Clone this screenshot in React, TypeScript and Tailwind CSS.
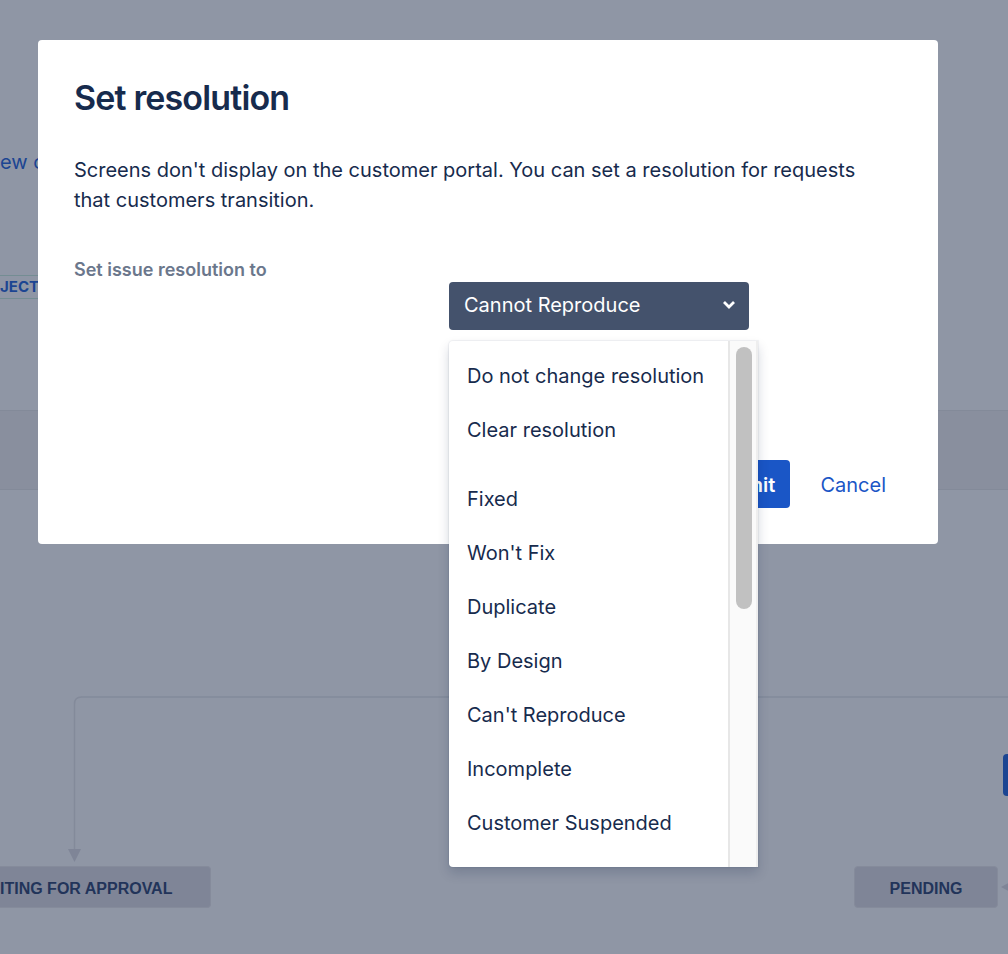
import React, { useState } from "react";

type Group = string[];

const groups: Group[] = [
  ["Do not change resolution", "Clear resolution"],
  ["Fixed", "Won't Fix", "Duplicate", "By Design", "Can't Reproduce", "Incomplete", "Customer Suspended"],
];

const Workflow: React.FC = () => (
  <div className="flex min-h-screen flex-col overflow-hidden bg-[#8f96a5]">
    <div className="h-[410px] pt-[147px]">
      <a href="#view" className="block text-xl leading-[30px] text-[#1c4592]">
        ew c
      </a>
      <div className="mt-[98px] flex">
        <span className="w-12 border-y border-[#748d93] text-[15px] leading-[22px] font-bold text-[#1c4592]">JECT</span>
      </div>
    </div>
    <div className="h-20 border-y border-[#838a99] bg-[#898f9e]" />

    {/* workflow canvas */}
    <div className="relative min-h-[464px] flex-1 font-['Liberation_Sans',sans-serif] text-base font-bold text-[#22345a]">
      <svg className="absolute inset-0 h-full w-full" fill="none">
        <path d="M74.5 360V214q0-7 7-7H4000" stroke="#838a9a" strokeWidth="1.5" />
        <path d="M68 359h13l-6.5 13z" fill="#7f8597" />
      </svg>
      <div className="absolute top-[376px] left-0 flex h-[42px] w-[211px] items-center rounded-r border border-l-0 border-[#858b9b] bg-[#7f8597] pt-[3px]">
        ITING FOR APPROVAL
      </div>
      <div className="absolute top-[376px] left-[854px] flex h-[42px] w-36 items-center justify-center rounded border border-[#858b9b] bg-[#7f8597] pt-[3px]">
        PENDING
      </div>
      <div className="absolute top-[264px] left-[1003px] h-[42px] w-36 rounded bg-[#1c4592]" />
      <svg className="absolute top-[390px] left-[1001px] h-3.5 w-3.5" viewBox="0 0 14 14">
        <path d="M0 7L13 0v14z" fill="#7f8597" />
      </svg>
    </div>
  </div>
);

const App: React.FC = () => {
  const [resolution, setResolution] = useState("Cannot Reproduce");

  return (
    <div className="relative overflow-hidden font-['Inter',sans-serif] text-[#172b4d]">
      <Workflow />

      <div className="absolute inset-x-0 top-0 pt-10 pr-[70px] pl-[38px]">
        <div role="dialog" aria-labelledby="dialog-title" className="rounded bg-white p-9">
          <h1 id="dialog-title" className="text-[34px] leading-[44px] font-semibold tracking-tight">
            Set resolution
          </h1>
          <p className="mt-[35px] pr-5 text-xl leading-[30px]">
            Screens don't display on the customer portal. You can set a resolution for requests that customers
            transition.
          </p>

          <label htmlFor="resolution" className="mt-[43px] block text-lg leading-6 font-semibold text-[#6b778c]">
            Set issue resolution to
          </label>
          <div className="relative ml-[375px] w-[300px]">
            <select
              id="resolution"
              value={resolution}
              onChange={(e) => setResolution(e.target.value)}
              className="block h-12 w-full appearance-none rounded bg-[#44526c] px-[15px] pb-[2px] text-xl text-white"
            >
              <option>Cannot Reproduce</option>
              {groups.flat().map((name) => (
                <option key={name}>{name}</option>
              ))}
            </select>
            <svg className="pointer-events-none absolute top-[17px] right-3 h-3 w-4" viewBox="0 0 16 12" fill="none">
              <path d="M3 3l5 5 5-5" stroke="white" strokeWidth="2.8" />
            </svg>

            <div className="absolute top-[59px] left-0 flex h-[526px] w-[309px] rounded-l bg-white shadow-[0_0_1px_1px_rgba(9,30,66,0.06),0_6px_12px_rgba(9,30,66,0.18)]">
              <ul role="listbox" aria-label="Resolutions" className="flex-1 pt-2 text-xl">
                {groups.map((group, i) => (
                  <li key={i} role="group" className="mb-[15px]">
                    {group.map((name) => (
                      <div
                        key={name}
                        role="option"
                        aria-selected={name === resolution}
                        onClick={() => setResolution(name)}
                        className="cursor-pointer pl-[18px] leading-[54px] whitespace-nowrap"
                      >
                        {name}
                      </div>
                    ))}
                  </li>
                ))}
              </ul>
              <div className="w-[30px] border-x-2 border-r-[#eeeeee] border-l-[#e7e7e7] bg-[#fafafa] px-1.5 pt-1.5">
                <div className="h-[262px] w-4 rounded-full bg-[#c1c1c1]" />
              </div>
            </div>
          </div>

          <div className="mt-[130px] flex items-center justify-end gap-[30px] pr-4">
            <button className="h-12 rounded bg-[#1a56c6] px-[15px] pt-[2px] text-xl font-semibold text-white">Submit</button>
            <button className="h-12 pt-[2px] text-xl text-[#1a56c6]">Cancel</button>
          </div>
        </div>
      </div>
    </div>
  );
};

export default App;
